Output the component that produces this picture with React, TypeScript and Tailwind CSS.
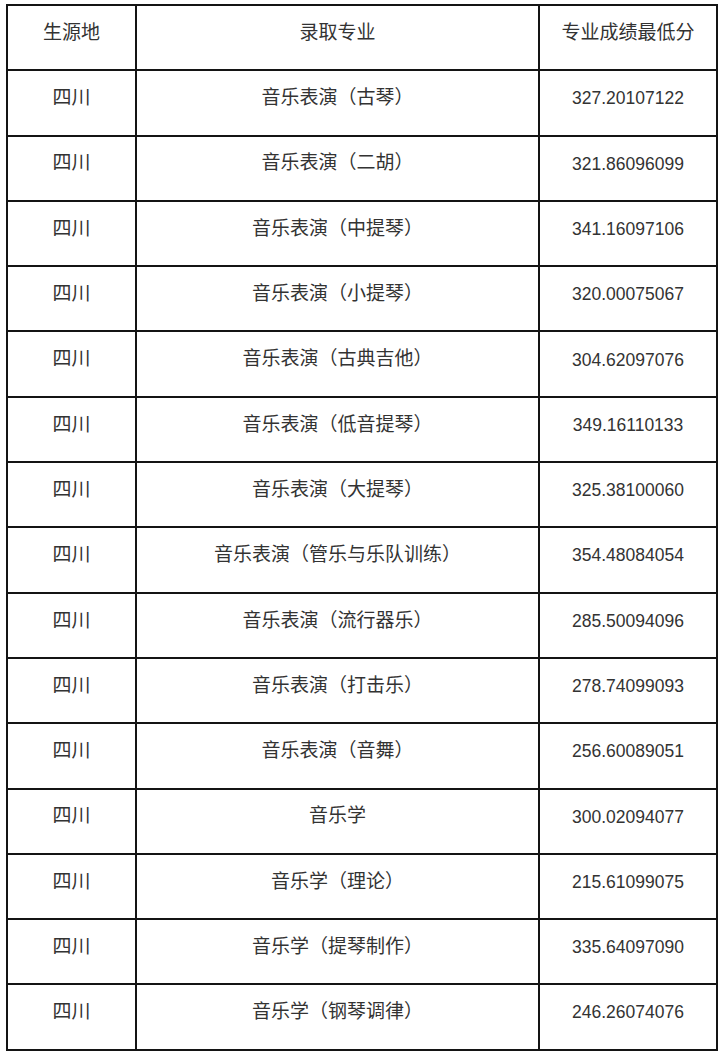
const rows: [string, string, string][] = [
  ["四川", "音乐表演（古琴）", "327.20107122"],
  ["四川", "音乐表演（二胡）", "321.86096099"],
  ["四川", "音乐表演（中提琴）", "341.16097106"],
  ["四川", "音乐表演（小提琴）", "320.00075067"],
  ["四川", "音乐表演（古典吉他）", "304.62097076"],
  ["四川", "音乐表演（低音提琴）", "349.16110133"],
  ["四川", "音乐表演（大提琴）", "325.38100060"],
  ["四川", "音乐表演（管乐与乐队训练）", "354.48084054"],
  ["四川", "音乐表演（流行器乐）", "285.50094096"],
  ["四川", "音乐表演（打击乐）", "278.74099093"],
  ["四川", "音乐表演（音舞）", "256.60089051"],
  ["四川", "音乐学", "300.02094077"],
  ["四川", "音乐学（理论）", "215.61099075"],
  ["四川", "音乐学（提琴制作）", "335.64097090"],
  ["四川", "音乐学（钢琴调律）", "246.26074076"],
];

function Cell({ children, num }: { children: React.ReactNode; num?: boolean }) {
  return (
    <td
      className={
        "border-2 border-[#141414] text-center align-middle pb-[9px] px-2 " +
        (num ? "text-[17.5px]" : "text-[19px]")
      }
    >
      {children}
    </td>
  );
}

export default function App() {
  return (
    <div className="w-[720px] h-[1051px] bg-white pt-[4px] pl-[6px]">
      <table
        className="border-collapse w-[712px] table-fixed text-[#333]"
        style={{ fontFamily: '"Liberation Sans", "Noto Sans CJK SC", sans-serif' }}
      >
        <colgroup>
          <col className="w-[129px]" />
          <col className="w-[403px]" />
          <col />
        </colgroup>
        <tbody>
          <tr className="h-[65.3px]">
            <Cell>生源地</Cell>
            <Cell>录取专业</Cell>
            <Cell>专业成绩最低分</Cell>
          </tr>
          {rows.map((r, i) => (
            <tr key={i} className="h-[65.3px]">
              <Cell>{r[0]}</Cell>
              <Cell>{r[1]}</Cell>
              <Cell num>{r[2]}</Cell>
            </tr>
          ))}
        </tbody>
      </table>
    </div>
  );
}
